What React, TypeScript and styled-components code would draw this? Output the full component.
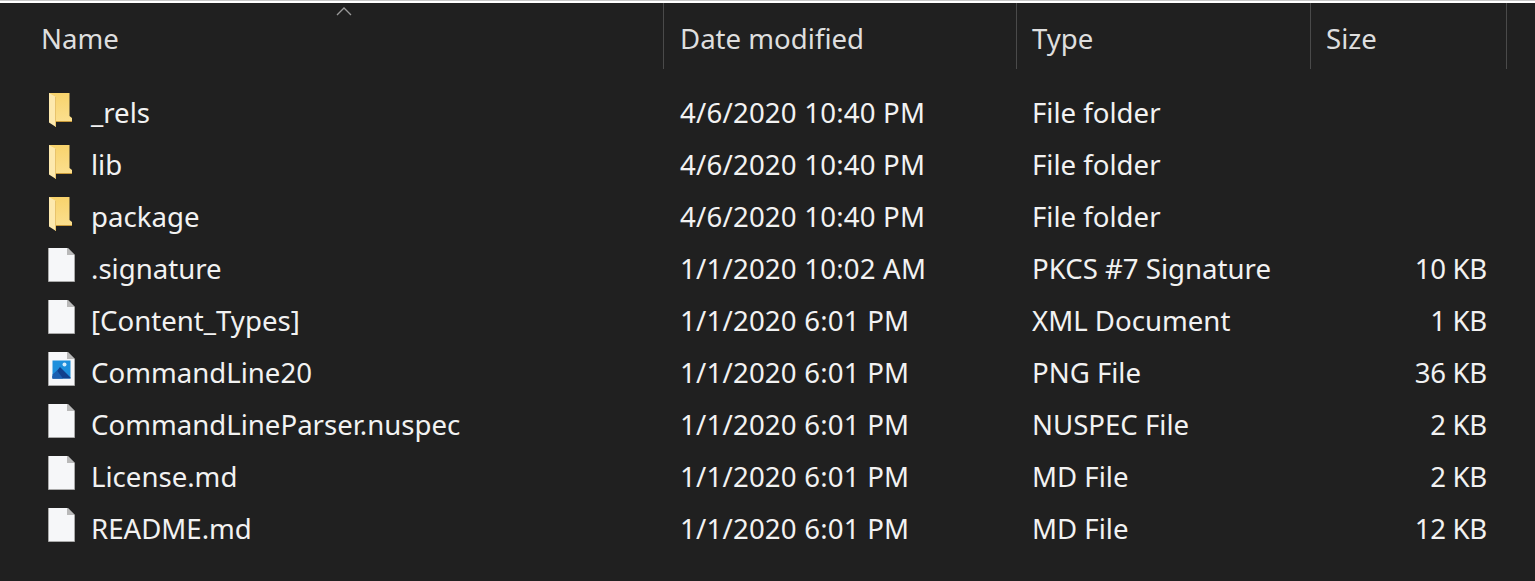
import React from 'react';
import styled, { createGlobalStyle } from 'styled-components';

const GlobalStyle = createGlobalStyle`
  html, body {
    margin: 0;
    padding: 0;
    background: #202020;
    overflow: hidden;
  }
`;

const COLUMNS = '664px 353px 294px 196px';

const Window = styled.div`
  width: 1535px;
  height: 581px;
  background: #202020;
  border-top: 1px solid #c8c8c8;
  box-sizing: border-box;
  font-family: "Noto Sans", "Open Sans", sans-serif;
  font-size: 27.6px;
  color: #f2f2f2;
`;

const TopLine = styled.div`
  height: 2px;
  background: #ffffff;
`;

const Header = styled.div`
  position: relative;
  display: grid;
  grid-template-columns: ${COLUMNS};
  height: 66px;
  margin-bottom: 17px;
`;

const HeaderCell = styled.div<{ $pad: number }>`
  display: flex;
  align-items: center;
  height: 66px;
  padding-left: ${p => p.$pad}px;
  padding-top: 4px;
  box-sizing: border-box;
  border-right: 1px solid #4a4a4a;
  color: #dedede;
`;

const SortArrow = styled.svg`
  position: absolute;
  left: 336px;
  top: 4px;
`;

const Row = styled.div`
  display: grid;
  grid-template-columns: ${COLUMNS};
  height: 52px;
  align-items: center;
`;

const NameCell = styled.div`
  display: flex;
  align-items: center;
  padding-left: 48px;
  gap: 16px;
`;

const IconBox = styled.svg`
  flex: none;
  display: block;
  margin-top: -4px;
`;

const DateCell = styled.div`
  padding-left: 16px;
  letter-spacing: 0.2px;
`;

const TypeCell = styled.div`
  padding-left: 15px;
`;

const SizeCell = styled.div`
  text-align: right;
  padding-right: 20px;
  letter-spacing: -0.3px;
`;

const FolderIcon = () => (
  <IconBox width="27" height="36" viewBox="0 0 27 36">
    <defs>
      <linearGradient id="folderBody" x1="0" y1="0" x2="0" y2="1">
        <stop offset="0" stopColor="#f8d36c" />
        <stop offset="1" stopColor="#fbdf8e" />
      </linearGradient>
    </defs>
    <path d="M1 1H21.5V24L24 26V29.5H1Z" fill="url(#folderBody)" />
    <path d="M8 29H24V30H8Z" fill="#c99a3a" />
    <path d="M1 1L8 5V35L1 30.5Z" fill="#fde9ae" />
    <path d="M8 5V35L7.2 34.5V4.5Z" fill="#e3b95c" />
  </IconBox>
);

const FileIcon = () => (
  <IconBox width="27" height="36" viewBox="0 1 27 36">
    <path d="M0.5 0.5H19L26.5 8V34.5H0.5Z" fill="#f6f7f9" stroke="#a9a9a9" />
    <path d="M19 0.5V8H26.5Z" fill="#b9b9b9" />
  </IconBox>
);

const ImageIcon = () => (
  <IconBox width="27" height="36" viewBox="0 1 27 36">
    <path d="M0.5 0.5H19L26.5 8V34.5H0.5Z" fill="#f6f7f9" stroke="#a9a9a9" />
    <path d="M19 0.5V8H26.5Z" fill="#b9b9b9" />
    <rect x="4.5" y="9.5" width="18" height="18" fill="#1d8fdc" />
    <circle cx="16.5" cy="13.5" r="2" fill="#d5ecfb" />
    <path d="M4.5 25.5L12 16L22.5 26.5V27.5H4.5Z" fill="#12408c" />
    <path d="M4.5 23.5L9 19.5L15 27.5H4.5Z" fill="#1b5fb0" />
  </IconBox>
);

type Kind = 'folder' | 'file' | 'image';

const icons: Record<Kind, React.FC> = {
  folder: FolderIcon,
  file: FileIcon,
  image: ImageIcon,
};

const files: { name: string; date: string; type: string; size: string; kind: Kind }[] = [
  { name: '_rels', date: '4/6/2020 10:40 PM', type: 'File folder', size: '', kind: 'folder' },
  { name: 'lib', date: '4/6/2020 10:40 PM', type: 'File folder', size: '', kind: 'folder' },
  { name: 'package', date: '4/6/2020 10:40 PM', type: 'File folder', size: '', kind: 'folder' },
  { name: '.signature', date: '1/1/2020 10:02 AM', type: 'PKCS #7 Signature', size: '10 KB', kind: 'file' },
  { name: '[Content_Types]', date: '1/1/2020 6:01 PM', type: 'XML Document', size: '1 KB', kind: 'file' },
  { name: 'CommandLine20', date: '1/1/2020 6:01 PM', type: 'PNG File', size: '36 KB', kind: 'image' },
  { name: 'CommandLineParser.nuspec', date: '1/1/2020 6:01 PM', type: 'NUSPEC File', size: '2 KB', kind: 'file' },
  { name: 'License.md', date: '1/1/2020 6:01 PM', type: 'MD File', size: '2 KB', kind: 'file' },
  { name: 'README.md', date: '1/1/2020 6:01 PM', type: 'MD File', size: '12 KB', kind: 'file' },
];

export default function App() {
  return (
    <Window>
      <GlobalStyle />
      <TopLine />
      <Header>
        <HeaderCell $pad={41}>Name</HeaderCell>
        <HeaderCell $pad={16}>Date modified</HeaderCell>
        <HeaderCell $pad={15}>Type</HeaderCell>
        <HeaderCell $pad={15}>Size</HeaderCell>
        <SortArrow width="16" height="9" viewBox="0 0 16 9">
          <path d="M1 8L8 1L15 8" fill="none" stroke="#9a9a9a" strokeWidth="1.3" />
        </SortArrow>
      </Header>
      {files.map(f => {
        const Icon = icons[f.kind];
        return (
          <Row key={f.name}>
            <NameCell>
              <Icon />
              {f.name}
            </NameCell>
            <DateCell>{f.date}</DateCell>
            <TypeCell>{f.type}</TypeCell>
            <SizeCell>{f.size}</SizeCell>
          </Row>
        );
      })}
    </Window>
  );
}
